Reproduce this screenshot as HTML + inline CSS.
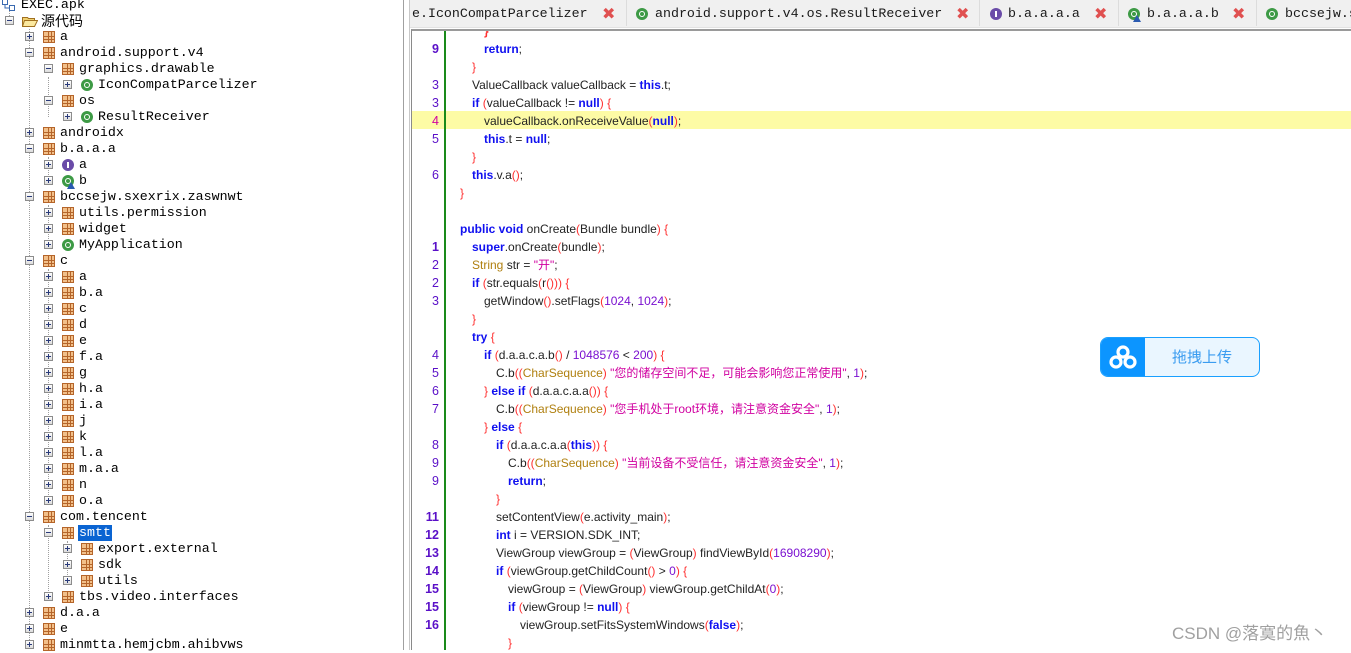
<!DOCTYPE html>
<html><head><meta charset="utf-8"><style>
*{margin:0;padding:0;box-sizing:border-box}
body{width:1351px;height:650px;overflow:hidden;background:#fff;position:relative;font-family:"Liberation Sans","Noto Sans CJK SC",sans-serif}
.tree{position:absolute;left:0;top:0;width:404px;height:650px;background:#fff;font-family:"Liberation Mono","Noto Sans CJK SC",monospace;font-size:13.3px;color:#000}
.r{position:absolute;left:0;height:16px;width:400px;line-height:16px;white-space:nowrap}
.r span{position:absolute;top:0}
.e{position:absolute;top:3px;width:9px;height:9px;border:1px solid #8c8c8c;background:linear-gradient(#fff,#dcdcdc)}
.e::before{content:"";position:absolute;left:1px;top:3px;width:5px;height:1px;background:#2a3b7a}
.e.p::after{content:"";position:absolute;left:3px;top:1px;width:1px;height:5px;background:#2a3b7a}
.pk{position:absolute;top:2px;width:12px;height:12px;border:1px solid #b5652a;background:#f2c08a;background-image:linear-gradient(90deg,transparent 4px,#b5652a 4px,#b5652a 5px,transparent 5px,transparent 7px,#b5652a 7px,#b5652a 8px,transparent 8px),linear-gradient(transparent 4px,#b5652a 4px,#b5652a 5px,transparent 5px,transparent 7px,#b5652a 7px,#b5652a 8px,transparent 8px)}
.g{position:absolute;top:2px;width:12px;height:12px;border-radius:50%;background:#3d9a45}
.g::after{content:"";position:absolute;left:3px;top:3px;width:4px;height:4px;border:1px solid #fff;border-radius:50%}
.ii{position:absolute;top:2px;width:12px;height:12px;border-radius:50%;background:#6a4ba8}
.ii::after{content:"";position:absolute;left:5px;top:3px;width:2px;height:6px;background:#fff}
.L1 .e{left:5px}.L1 .pk{left:23px}.L1 span{left:41px}
.L2 .e{left:25px}.L2 .pk,.L2 .g,.L2 .ii{left:43px}.L2 span{left:60px}
.L3 .e{left:44px}.L3 .pk,.L3 .g,.L3 .ii{left:62px}.L3 span{left:79px}
.L4 .e{left:63px}.L4 .pk,.L4 .g,.L4 .ii{left:81px}.L4 span{left:98px}
.vl{position:absolute;border-left:1px dotted #a0a0a0}
.sel{background:#0a64d2;color:#fff;padding:0 1px;margin-left:-1px}
.div1{position:absolute;left:403px;top:0;width:1px;height:650px;background:#a0a0a0}
.div2{position:absolute;left:409px;top:0;width:1px;height:650px;background:#c8c8c8}
.tabs{position:absolute;left:410px;top:0;width:941px;height:28px;background:#f0f0f0;border-bottom:1px solid #e2e2e2;font-family:"Liberation Mono","Noto Sans CJK SC",monospace;font-size:13.3px;color:#1a1a1a}
.tab{position:absolute;top:0;height:28px;line-height:28px;white-space:nowrap}
.sep{position:absolute;top:0;width:1px;height:26px;background:#dcdcdc}
.x{position:absolute;top:7px;color:#e05050;font-size:16px;line-height:14px;font-weight:bold;font-family:"DejaVu Sans",sans-serif}
.tabs .g,.tabs .ii{top:8px}
.ed{position:absolute;left:411px;top:29px;width:940px;height:621px;border-left:1px solid #8a8a8a;border-top:2px solid #9a9a9a;overflow:hidden}
.gl{position:absolute;left:32px;top:0;width:2px;height:621px;background:#1a8a1a}
.c{position:absolute;left:0;width:940px;height:18px;line-height:18px;font-size:12px;color:#222;white-space:nowrap}
.c .ln{position:absolute;left:0;width:27px;text-align:right;color:#5a10c8;font-size:12.5px}
.c .t{position:absolute;top:0}
.hl{background:#fdfba5}
.k{color:#1010f0;font-weight:bold}.p{color:#ff3030}.s{color:#d000a0}.n{color:#7a10d0}.ty{color:#b08010}
.btn{position:absolute;left:1100px;top:337px;width:160px;height:40px;border:1px solid #1aa0ff;border-radius:8px;background:#eaf6ff;overflow:hidden}
.btn .ic{position:absolute;left:0;top:0;width:44px;height:40px;background:#0c95ff}
.btn .tx{position:absolute;left:44px;top:0;width:114px;line-height:38px;text-align:center;color:#3a9cf0;font-size:15px;font-family:"Noto Sans CJK SC",sans-serif}
.wm{position:absolute;left:1172px;top:619px;font-size:17px;color:#a0a0a0;font-family:"Liberation Sans","Noto Sans CJK SC",sans-serif}
</style></head><body>
<div class="tree">
<div class="vl" style="left:9px;top:10px;height:10px"></div>
<div class="vl" style="left:29px;top:29px;height:615px"></div>
<div class="vl" style="left:48px;top:77px;height:40px"></div>
<div class="vl" style="left:48px;top:157px;height:24px"></div>
<div class="vl" style="left:48px;top:205px;height:40px"></div>
<div class="vl" style="left:48px;top:269px;height:232px"></div>
<div class="vl" style="left:48px;top:525px;height:72px"></div>
<div class="vl" style="left:67px;top:541px;height:40px"></div>
<div class="r" style="top:-3px"><svg style="position:absolute;left:2px;top:2px" width="14" height="13"><rect x="0.5" y="0.5" width="5" height="5" fill="#fff" stroke="#3a6ab0"/><rect x="7.5" y="6.5" width="5" height="5" fill="#fff" stroke="#3a6ab0"/><path d="M3 6v3h4" stroke="#3a6ab0" fill="none"/></svg><span style="left:21px">EXEC.apk</span></div>
<div class="r L1" style="top:13px"><i class="e"></i><svg style="position:absolute;left:22px;top:2px" width="16" height="13"><path d="M0.5 2.5h5l1 1h6v8h-12z" fill="#f0d070" stroke="#a07020"/><path d="M2.5 5.5h13l-3 6h-12z" fill="#fbe9a0" stroke="#a07020"/></svg><span style="font-family:'Noto Sans CJK SC',sans-serif;font-size:14px">源代码</span></div>
<div class="r L2" style="top:29px"><i class="e p"></i><i class="pk"></i><span>a</span></div>
<div class="r L2" style="top:45px"><i class="e"></i><i class="pk"></i><span>android.support.v4</span></div>
<div class="r L3" style="top:61px"><i class="e"></i><i class="pk"></i><span>graphics.drawable</span></div>
<div class="r L4" style="top:77px"><i class="e p"></i><i class="g"></i><span>IconCompatParcelizer</span></div>
<div class="r L3" style="top:93px"><i class="e"></i><i class="pk"></i><span>os</span></div>
<div class="r L4" style="top:109px"><i class="e p"></i><i class="g"></i><span>ResultReceiver</span></div>
<div class="r L2" style="top:125px"><i class="e p"></i><i class="pk"></i><span>androidx</span></div>
<div class="r L2" style="top:141px"><i class="e"></i><i class="pk"></i><span>b.a.a.a</span></div>
<div class="r L3" style="top:157px"><i class="e p"></i><i class="ii"></i><span>a</span></div>
<div class="r L3" style="top:173px"><i class="e p"></i><i class="g"></i><svg style="position:absolute;left:67px;top:9px" width="8" height="7"><path d="M4 0L8 7H0z" fill="#2a5ab0"/></svg><span>b</span></div>
<div class="r L2" style="top:189px"><i class="e"></i><i class="pk"></i><span>bccsejw.sxexrix.zaswnwt</span></div>
<div class="r L3" style="top:205px"><i class="e p"></i><i class="pk"></i><span>utils.permission</span></div>
<div class="r L3" style="top:221px"><i class="e p"></i><i class="pk"></i><span>widget</span></div>
<div class="r L3" style="top:237px"><i class="e p"></i><i class="g"></i><span>MyApplication</span></div>
<div class="r L2" style="top:253px"><i class="e"></i><i class="pk"></i><span>c</span></div>
<div class="r L3" style="top:269px"><i class="e p"></i><i class="pk"></i><span>a</span></div>
<div class="r L3" style="top:285px"><i class="e p"></i><i class="pk"></i><span>b.a</span></div>
<div class="r L3" style="top:301px"><i class="e p"></i><i class="pk"></i><span>c</span></div>
<div class="r L3" style="top:317px"><i class="e p"></i><i class="pk"></i><span>d</span></div>
<div class="r L3" style="top:333px"><i class="e p"></i><i class="pk"></i><span>e</span></div>
<div class="r L3" style="top:349px"><i class="e p"></i><i class="pk"></i><span>f.a</span></div>
<div class="r L3" style="top:365px"><i class="e p"></i><i class="pk"></i><span>g</span></div>
<div class="r L3" style="top:381px"><i class="e p"></i><i class="pk"></i><span>h.a</span></div>
<div class="r L3" style="top:397px"><i class="e p"></i><i class="pk"></i><span>i.a</span></div>
<div class="r L3" style="top:413px"><i class="e p"></i><i class="pk"></i><span>j</span></div>
<div class="r L3" style="top:429px"><i class="e p"></i><i class="pk"></i><span>k</span></div>
<div class="r L3" style="top:445px"><i class="e p"></i><i class="pk"></i><span>l.a</span></div>
<div class="r L3" style="top:461px"><i class="e p"></i><i class="pk"></i><span>m.a.a</span></div>
<div class="r L3" style="top:477px"><i class="e p"></i><i class="pk"></i><span>n</span></div>
<div class="r L3" style="top:493px"><i class="e p"></i><i class="pk"></i><span>o.a</span></div>
<div class="r L2" style="top:509px"><i class="e"></i><i class="pk"></i><span>com.tencent</span></div>
<div class="r L3" style="top:525px"><i class="e"></i><i class="pk"></i><span class="sel">smtt</span></div>
<div class="r L4" style="top:541px"><i class="e p"></i><i class="pk"></i><span>export.external</span></div>
<div class="r L4" style="top:557px"><i class="e p"></i><i class="pk"></i><span>sdk</span></div>
<div class="r L4" style="top:573px"><i class="e p"></i><i class="pk"></i><span>utils</span></div>
<div class="r L3" style="top:589px"><i class="e p"></i><i class="pk"></i><span>tbs.video.interfaces</span></div>
<div class="r L2" style="top:605px"><i class="e p"></i><i class="pk"></i><span>d.a.a</span></div>
<div class="r L2" style="top:621px"><i class="e p"></i><i class="pk"></i><span>e</span></div>
<div class="r L2" style="top:637px"><i class="e p"></i><i class="pk"></i><span>minmtta.hemjcbm.ahibvws</span></div>
</div>
<div class="div1"></div><div class="div2"></div>
<div class="tabs">
<div class="tab" style="left:2px">e.IconCompatParcelizer</div><div class="x" style="left:192px">✖</div><div class="sep" style="left:216px"></div>
<i class="g" style="left:226px"></i><div class="tab" style="left:245px">android.support.v4.os.ResultReceiver</div><div class="x" style="left:546px">✖</div><div class="sep" style="left:569px"></div>
<i class="ii" style="left:580px"></i><div class="tab" style="left:598px">b.a.a.a.a</div><div class="x" style="left:684px">✖</div><div class="sep" style="left:708px"></div>
<i class="g" style="left:718px"></i><svg style="position:absolute;left:723px;top:15px" width="8" height="7"><path d="M4 0L8 7H0z" fill="#2a5ab0"/></svg><div class="tab" style="left:737px">b.a.a.a.b</div><div class="x" style="left:822px">✖</div><div class="sep" style="left:846px"></div>
<i class="g" style="left:856px"></i><div class="tab" style="left:875px">bccsejw.sxexrix</div>
</div>
<div class="ed">
<div class="c hl" style="top:80px"></div>
<div class="gl"></div>
<div class="c" style="top:-9px"><b class="t" style="left:72px"><span class="p">}</span></b></div>
<div class="c" style="top:9px"><b class="ln">9</b><span class="t" style="left:72px"><span class="k">return</span>;</span></div>
<div class="c" style="top:27px"><span class="t" style="left:60px"><span class="p">}</span></span></div>
<div class="c" style="top:45px"><b class="ln" style="font-weight:normal">3</b><span class="t" style="left:60px">ValueCallback valueCallback = <span class="k">this</span>.t;</span></div>
<div class="c" style="top:63px"><b class="ln" style="font-weight:normal">3</b><span class="t" style="left:60px"><span class="k">if</span> <span class="p">(</span>valueCallback != <span class="k">null</span><span class="p">)</span> <span class="p">{</span></span></div>
<div class="c" style="top:81px"><b class="ln" style="font-weight:normal;color:#d000a0">4</b><span class="t" style="left:72px">valueCallback.onReceiveValue<span class="p">(</span><span class="k">null</span><span class="p">)</span>;</span></div>
<div class="c" style="top:99px"><b class="ln" style="font-weight:normal">5</b><span class="t" style="left:72px"><span class="k">this</span>.t = <span class="k">null</span>;</span></div>
<div class="c" style="top:117px"><span class="t" style="left:60px"><span class="p">}</span></span></div>
<div class="c" style="top:135px"><b class="ln" style="font-weight:normal">6</b><span class="t" style="left:60px"><span class="k">this</span>.v.a<span class="p">()</span>;</span></div>
<div class="c" style="top:153px"><span class="t" style="left:48px"><span class="p">}</span></span></div>
<div class="c" style="top:189px"><span class="t" style="left:48px"><span class="k">public void</span> onCreate<span class="p">(</span>Bundle bundle<span class="p">)</span> <span class="p">{</span></span></div>
<div class="c" style="top:207px"><b class="ln">1</b><span class="t" style="left:60px"><span class="k">super</span>.onCreate<span class="p">(</span>bundle<span class="p">)</span>;</span></div>
<div class="c" style="top:225px"><b class="ln" style="font-weight:normal">2</b><span class="t" style="left:60px"><span class="ty">String</span> str = <span class="s">"开"</span>;</span></div>
<div class="c" style="top:243px"><b class="ln" style="font-weight:normal">2</b><span class="t" style="left:60px"><span class="k">if</span> <span class="p">(</span>str.equals<span class="p">(</span>r<span class="p">()))</span> <span class="p">{</span></span></div>
<div class="c" style="top:261px"><b class="ln" style="font-weight:normal">3</b><span class="t" style="left:72px">getWindow<span class="p">()</span>.setFlags<span class="p">(</span><span class="n">1024</span>, <span class="n">1024</span><span class="p">)</span>;</span></div>
<div class="c" style="top:279px"><span class="t" style="left:60px"><span class="p">}</span></span></div>
<div class="c" style="top:297px"><span class="t" style="left:60px"><span class="k">try</span> <span class="p">{</span></span></div>
<div class="c" style="top:315px"><b class="ln" style="font-weight:normal">4</b><span class="t" style="left:72px"><span class="k">if</span> <span class="p">(</span>d.a.a.c.a.b<span class="p">()</span> / <span class="n">1048576</span> &lt; <span class="n">200</span><span class="p">)</span> <span class="p">{</span></span></div>
<div class="c" style="top:333px"><b class="ln" style="font-weight:normal">5</b><span class="t" style="left:84px">C.b<span class="p">((</span><span class="ty">CharSequence</span><span class="p">)</span> <span class="s">"您的储存空间不足，可能会影响您正常使用"</span>, <span class="n">1</span><span class="p">)</span>;</span></div>
<div class="c" style="top:351px"><b class="ln" style="font-weight:normal">6</b><span class="t" style="left:72px"><span class="p">}</span> <span class="k">else if</span> <span class="p">(</span>d.a.a.c.a.a<span class="p">())</span> <span class="p">{</span></span></div>
<div class="c" style="top:369px"><b class="ln" style="font-weight:normal">7</b><span class="t" style="left:84px">C.b<span class="p">((</span><span class="ty">CharSequence</span><span class="p">)</span> <span class="s">"您手机处于root环境，请注意资金安全"</span>, <span class="n">1</span><span class="p">)</span>;</span></div>
<div class="c" style="top:387px"><span class="t" style="left:72px"><span class="p">}</span> <span class="k">else</span> <span class="p">{</span></span></div>
<div class="c" style="top:405px"><b class="ln" style="font-weight:normal">8</b><span class="t" style="left:84px"><span class="k">if</span> <span class="p">(</span>d.a.a.c.a.a<span class="p">(</span><span class="k">this</span><span class="p">))</span> <span class="p">{</span></span></div>
<div class="c" style="top:423px"><b class="ln" style="font-weight:normal">9</b><span class="t" style="left:96px">C.b<span class="p">((</span><span class="ty">CharSequence</span><span class="p">)</span> <span class="s">"当前设备不受信任，请注意资金安全"</span>, <span class="n">1</span><span class="p">)</span>;</span></div>
<div class="c" style="top:441px"><b class="ln" style="font-weight:normal">9</b><span class="t" style="left:96px"><span class="k">return</span>;</span></div>
<div class="c" style="top:459px"><span class="t" style="left:84px"><span class="p">}</span></span></div>
<div class="c" style="top:477px"><b class="ln">11</b><span class="t" style="left:84px">setContentView<span class="p">(</span>e.activity_main<span class="p">)</span>;</span></div>
<div class="c" style="top:495px"><b class="ln">12</b><span class="t" style="left:84px"><span class="k">int</span> i = VERSION.SDK_INT;</span></div>
<div class="c" style="top:513px"><b class="ln">13</b><span class="t" style="left:84px">ViewGroup viewGroup = <span class="p">(</span>ViewGroup<span class="p">)</span> findViewById<span class="p">(</span><span class="n">16908290</span><span class="p">)</span>;</span></div>
<div class="c" style="top:531px"><b class="ln">14</b><span class="t" style="left:84px"><span class="k">if</span> <span class="p">(</span>viewGroup.getChildCount<span class="p">()</span> &gt; <span class="n">0</span><span class="p">)</span> <span class="p">{</span></span></div>
<div class="c" style="top:549px"><b class="ln">15</b><span class="t" style="left:96px">viewGroup = <span class="p">(</span>ViewGroup<span class="p">)</span> viewGroup.getChildAt<span class="p">(</span><span class="n">0</span><span class="p">)</span>;</span></div>
<div class="c" style="top:567px"><b class="ln">15</b><span class="t" style="left:96px"><span class="k">if</span> <span class="p">(</span>viewGroup != <span class="k">null</span><span class="p">)</span> <span class="p">{</span></span></div>
<div class="c" style="top:585px"><b class="ln">16</b><span class="t" style="left:108px">viewGroup.setFitsSystemWindows<span class="p">(</span><span class="k">false</span><span class="p">)</span>;</span></div>
<div class="c" style="top:603px"><span class="t" style="left:96px"><span class="p">}</span></span></div>
</div>
<div class="btn"><div class="ic"><svg width="44" height="40"><g fill="none" stroke="#fff" stroke-width="3.2"><circle cx="22" cy="14" r="5"/><circle cx="15" cy="24" r="5"/><circle cx="29" cy="24" r="5"/></g></svg></div><div class="tx">拖拽上传</div></div>
<div class="wm">CSDN @落寞的魚丶</div>
</body></html>
